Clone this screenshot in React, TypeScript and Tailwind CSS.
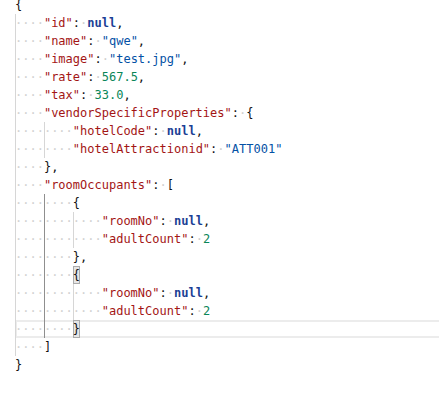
type Tok = [string, string];

type Line = {
  indent: number;
  guides: string[]; // one per indent unit: "" | "light" | "dark"
  toks: Tok[];
  current?: boolean;
  match?: boolean;
};

const L = "light";
const D = "dark";

const lines: Line[] = [
  { indent: 0, guides: [], toks: [["p", "{"]] },
  { indent: 1, guides: [L], toks: [["k", '"id"'], ["p", ":"], ["w", " "], ["n", "null"], ["p", ","]] },
  { indent: 1, guides: [L], toks: [["k", '"name"'], ["p", ":"], ["w", " "], ["s", '"qwe"'], ["p", ","]] },
  { indent: 1, guides: [L], toks: [["k", '"image"'], ["p", ":"], ["w", " "], ["s", '"test.jpg"'], ["p", ","]] },
  { indent: 1, guides: [L], toks: [["k", '"rate"'], ["p", ":"], ["w", " "], ["d", "567.5"], ["p", ","]] },
  { indent: 1, guides: [L], toks: [["k", '"tax"'], ["p", ":"], ["w", " "], ["d", "33.0"], ["p", ","]] },
  { indent: 1, guides: [L], toks: [["k", '"vendorSpecificProperties"'], ["p", ":"], ["w", " "], ["p", "{"]] },
  { indent: 2, guides: [L, L], toks: [["k", '"hotelCode"'], ["p", ":"], ["w", " "], ["n", "null"], ["p", ","]] },
  { indent: 2, guides: [L, L], toks: [["k", '"hotelAttractionid"'], ["p", ":"], ["w", " "], ["s", '"ATT001"']] },
  { indent: 1, guides: [L], toks: [["p", "},"]] },
  { indent: 1, guides: [L], toks: [["k", '"roomOccupants"'], ["p", ":"], ["w", " "], ["p", "["]] },
  { indent: 2, guides: [L, D], toks: [["p", "{"]] },
  { indent: 3, guides: [L, D, L], toks: [["k", '"roomNo"'], ["p", ":"], ["w", " "], ["n", "null"], ["p", ","]] },
  { indent: 3, guides: [L, D, L], toks: [["k", '"adultCount"'], ["p", ":"], ["w", " "], ["d", "2"]] },
  { indent: 2, guides: [L, D], toks: [["p", "},"]] },
  { indent: 2, guides: [L, D], toks: [["p", "{"]], match: true },
  { indent: 3, guides: [L, D, L], toks: [["k", '"roomNo"'], ["p", ":"], ["w", " "], ["n", "null"], ["p", ","]] },
  { indent: 3, guides: [L, D, L], toks: [["k", '"adultCount"'], ["p", ":"], ["w", " "], ["d", "2"]] },
  { indent: 2, guides: [L, D], toks: [["p", "}"]], match: true, current: true },
  { indent: 1, guides: [L], toks: [["p", "]"]] },
  { indent: 0, guides: [], toks: [["p", "}"]] },
];

function Token({ kind, text, match }: { kind: string; text: string; match?: boolean }) {
  if (kind === "w") return <span className="text-[#cfcfcf]">·</span>;
  if (kind === "k") return <span className="text-[#a31515]">{text}</span>;
  if (kind === "s") return <span className="text-[#0451a5]">{text}</span>;
  if (kind === "d") return <span className="text-[#098658]">{text}</span>;
  if (kind === "n") return <span className="font-bold text-[#1c3f95]">{text}</span>;
  if (match)
    return (
      <span className="inline-block h-[18px] bg-[#e6e6e6] text-[#111] shadow-[inset_0_0_0_1px_#ababab]">{text}</span>
    );
  return <span className="text-[#111]">{text}</span>;
}

function Indent({ guide }: { guide: string }) {
  const cls =
    guide === "dark"
      ? "shadow-[inset_1px_0_0_#8f8f8f]"
      : guide === "light"
        ? "shadow-[inset_1px_0_0_#d6d6d6]"
        : "";
  return <span className={`inline-block h-[18px] text-[#d2d2d2] ${cls}`}>····</span>;
}

export default function App() {
  return (
    <div className="h-[407px] w-[439px] overflow-hidden bg-white">
      <div
        className="-mt-1 pl-[15px] text-[12px] leading-[18px] whitespace-pre"
        style={{ fontFamily: '"DejaVu Sans Mono", monospace' }}
      >
        {lines.map((line, i) => (
          <div
            key={i}
            className={`flex h-[18px] ${
              line.current
                ? "shadow-[inset_0_2px_0_#ececec,inset_0_-2px_0_#ececec,inset_2px_0_0_#ececec]"
                : ""
            }`}
          >
            {line.guides.map((g, j) => (
              <Indent key={j} guide={g} />
            ))}
            {line.toks.map(([k, t], j) => (
              <Token key={j} kind={k} text={t} match={line.match} />
            ))}
          </div>
        ))}
      </div>
    </div>
  );
}
